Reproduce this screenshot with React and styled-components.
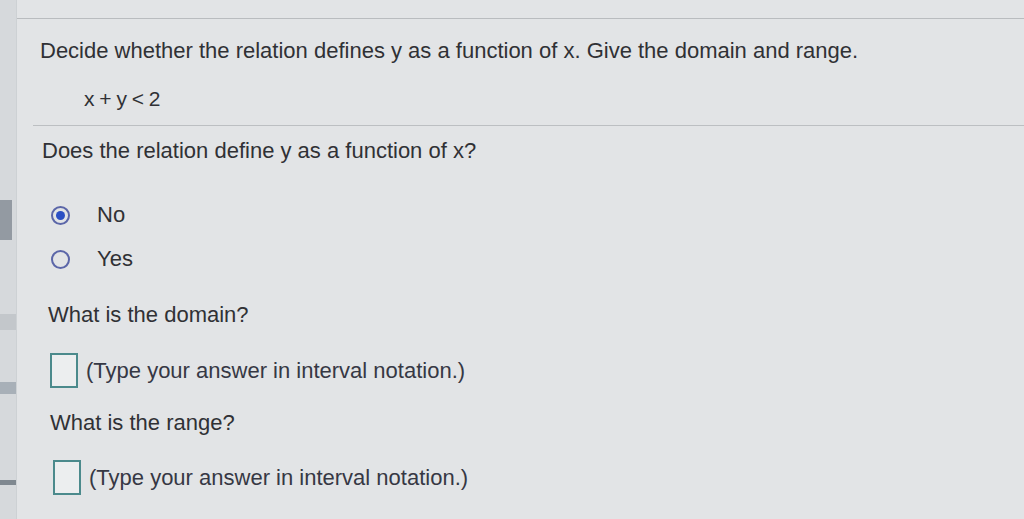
import React from "react";
import styled, { createGlobalStyle } from "styled-components";

const GlobalStyle = createGlobalStyle`
  html, body {
    margin: 0;
    padding: 0;
    background: #e2e4e6;
  }
  body {
    font-family: "Liberation Sans", Arial, sans-serif;
    color: #303135;
  }
`;

const Screen = styled.div`
  display: flex;
  width: 1024px;
  height: 519px;
  overflow: hidden;
  background: #e2e4e6;
`;

const SideStrip = styled.div`
  width: 16px;
  flex-shrink: 0;
  background: #d6d9dc;
  border-right: 1px solid #cdd1d4;
  display: flex;
  flex-direction: column;
  padding-top: 200px;
`;

const StripMark = styled.div`
  height: ${(p) => p.h}px;
  margin-top: ${(p) => p.mt || 0}px;
  background: ${(p) => p.c || "#9aa1a8"};
  width: ${(p) => p.w || 12}px;
`;

const Content = styled.div`
  flex: 1;
  display: flex;
  flex-direction: column;
`;

const Header = styled.div`
  margin-top: 18px;
  border-top: 1.5px solid #b9bcbf;
  padding: 18px 0 0 23px;
  height: 107px;
  box-sizing: border-box;
`;

const Prompt = styled.div`
  font-size: 22px;
  line-height: 28px;
`;

const Relation = styled.div`
  margin-top: 22px;
  padding-left: 44px;
  font-size: 21px;
  line-height: 24px;
  letter-spacing: -0.5px;
`;

const Body = styled.div`
  margin-left: 16px;
  border-top: 1.5px solid #bcbfc2;
  padding: 12px 0 0 9px;
  display: flex;
  flex-direction: column;
`;

const Question = styled.div`
  font-size: 22px;
  line-height: 26px;
  padding-left: ${(p) => p.indent || 0}px;
  margin-top: ${(p) => p.mt || 0}px;
`;

const Options = styled.div`
  display: flex;
  flex-direction: column;
  gap: 18px;
  margin-top: 38px;
  padding-left: 9px;
`;

const Option = styled.label`
  display: flex;
  align-items: center;
  gap: 27px;
  font-size: 22px;
  line-height: 26px;
`;

const Radio = styled.span`
  width: 15px;
  height: 15px;
  border-radius: 50%;
  border: 2px solid #5b66a8;
  display: flex;
  align-items: center;
  justify-content: center;
  box-sizing: content-box;

  &::after {
    content: "";
    width: 9px;
    height: 9px;
    border-radius: 50%;
    background: ${(p) => (p.checked ? "#2b4fc4" : "transparent")};
  }
`;

const AnswerRow = styled.div`
  display: flex;
  align-items: center;
  gap: 8px;
  margin-top: ${(p) => p.mt}px;
  padding-left: ${(p) => p.indent}px;
`;

const AnswerBox = styled.span`
  width: 24px;
  height: 31px;
  border: 2px solid #4b8a8c;
  background: #eceeef;
  flex-shrink: 0;
`;

const Hint = styled.span`
  font-size: 22px;
  line-height: 26px;
  color: #363844;
`;

export default function App() {
  return (
    <>
      <GlobalStyle />
      <Screen>
        <SideStrip>
          <StripMark h={40} c="#939aa2" />
          <StripMark h={16} mt={74} w={16} c="#c3c7cb" />
          <StripMark h={12} mt={52} w={16} c="#a8b0b8" />
          <StripMark h={5} mt={86} w={16} c="#7f8890" />
        </SideStrip>
        <Content>
          <Header>
            <Prompt>
              Decide whether the relation defines y as a function of x. Give the domain and range.
            </Prompt>
            <Relation>x + y &lt; 2</Relation>
          </Header>
          <Body>
            <Question>Does the relation define y as a function of x?</Question>
            <Options>
              <Option>
                <Radio checked />
                No
              </Option>
              <Option>
                <Radio />
                Yes
              </Option>
            </Options>
            <Question indent={6} mt={30}>What is the domain?</Question>
            <AnswerRow mt={25} indent={8}>
              <AnswerBox />
              <Hint>(Type your answer in interval notation.)</Hint>
            </AnswerRow>
            <Question indent={8} mt={22}>What is the range?</Question>
            <AnswerRow mt={24} indent={11}>
              <AnswerBox />
              <Hint>(Type your answer in interval notation.)</Hint>
            </AnswerRow>
          </Body>
        </Content>
      </Screen>
    </>
  );
}
